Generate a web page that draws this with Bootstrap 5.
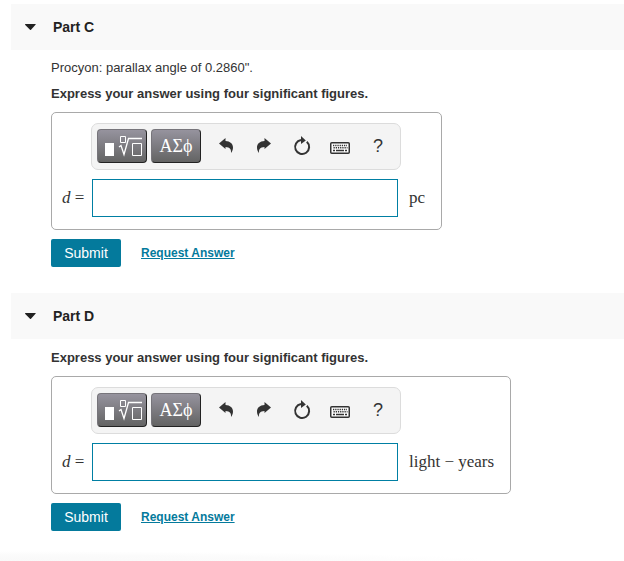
<!DOCTYPE html>
<html lang="en">
<head>
<meta charset="utf-8">
<meta name="viewport" content="width=device-width, initial-scale=1">
<title>Parallax – Parts C and D</title>
<link rel="stylesheet" href="https://cdn.jsdelivr.net/npm/bootstrap@5.3.0/dist/css/bootstrap.min.css">
<style>
  body { font: 13px/18px "Liberation Sans", Arial, sans-serif; color: #333; background: #fff; }
  .part-list { padding: 4px 0 0 11px; gap: 26px; }
  .part-head { height: 46px; padding: 0 14px; gap: 17px; background: #f9f9f9; color: #222; font-size: 14px; font-weight: 700; border: 0; text-align: left; }
  .part-body { padding: 9px 0 0 40px; }
  .prompt { margin-bottom: 8px; }
  .instruct { margin-bottom: 9px; font-weight: 700; }
  .instruct:first-child { padding-top: 1px; }
  .answer-box { width: fit-content; padding: 10px 16px 12px 10px; border: 1px solid #a9a9a9; border-radius: 5px; }
  .answer-grid { display: grid; grid-template-columns: 30px auto auto; row-gap: 9px; align-items: center; }
  .tools { grid-column: 2 / 4; justify-self: start; height: 47px; padding: 0 3px 2px 5px; margin-left: -1px; background: #f4f4f4; border: 1px solid #dcdcdc; border-radius: 7px; }
  .tpl { width: 50px; height: 34px; padding: 0; margin-right: 4px; border: 1px solid; border-color: #77757b #222 #222 #77757b; border-radius: 4px; background: linear-gradient(#96939e, #636363); color: #fff; font: 18px/32px "Liberation Serif", serif; }
  .tpl + .tpl { margin-right: 6px; }
  .tool { width: 38px; height: 34px; padding: 0; border: 0; background: none; color: #333; font-size: 18px; line-height: 34px; }
  .tool svg, .tpl svg { display: block; margin: auto; }
  .math { font: 17px/20px "Liberation Serif", serif; color: #333; }
  .entry { width: 306px; height: 38px; border: 1px solid #007fa3; border-radius: 0; padding: 0 8px; }
  .unit { padding-left: 11px; }
  .act-row { padding-top: 9px; gap: 20px; }
  .submit { width: 70px; height: 28px; padding: 0; border: 0; border-radius: 2px; background: #047a9c; color: #fff; font-size: 14px; line-height: 28px; }
  .ask { color: #047a9c; font-size: 12px; font-weight: 700; }
  .page-end { width: 80%; height: 10px; margin-top: 20px; background: radial-gradient(ellipse 100% 100% at 0 100%, #f9f9f9 0, #fbfbfb 60%, #fff 100%); }
</style>
</head>
<body>
<svg class="d-none" aria-hidden="true">
  <symbol id="caret" viewBox="0 0 11 6"><path d="M.5 0h10q.5 0 0 .7L6 5.700q-.5.5-1 0L0 .7Q0 0 .5 0z" fill="#222"/></symbol>
  <symbol id="root" viewBox="0 0 40 24"><path d="M3 9h9v13H3z" fill="#fff"/><path d="M18.500 2.500h5v6h-5zM30.500 9.500h9v12h-9z" fill="none" stroke="#fff"/><path d="M17 13l2-1.500 3 9L26.500 4.500H40" fill="none" stroke="#fff" stroke-width="1.300"/></symbol>
  <symbol id="undo" viewBox="0 0 14 15"><path d="M0 5.500L6.500 0v3c4.600.3 7.500 2.700 7.500 6.500 0 2-.6 3.800-2 5.500.4-3.500-1-5.800-5.500-6V11z" fill="#333"/></symbol>
  <symbol id="reset" viewBox="0 0 18 20"><path d="M13.800 5.800A7 7 0 1 1 8 4.100" fill="none" stroke="#333" stroke-width="2"/><path d="M8 0l4.800 4.500L8 8z" fill="#333"/></symbol>
  <symbol id="keys" viewBox="0 0 20 12"><rect x=".75" y=".75" width="18.500" height="10.500" rx="1" fill="#fff" stroke="#333" stroke-width="1.500"/><path d="M3 3.500h14M3.500 5.700h14" stroke="#333" stroke-width="1.500" stroke-dasharray="1.300 .9"/><path d="M3 8.500h2m1 0h8m1 0h2" stroke="#333" stroke-width="1.500"/></symbol>
</svg>
<main class="part-list d-flex flex-column">
  <section>
    <button type="button" class="part-head d-flex align-items-center w-100" aria-expanded="true"><svg width="11" height="6" aria-hidden="true"><use href="#caret"/></svg>Part C</button>
    <div class="part-body">
      <p class="prompt">Procyon: parallax angle of 0.2860".</p>
      <p class="instruct">Express your answer using four significant figures.</p>
      <div class="answer-box">
        <div class="answer-grid">
          <div class="tools d-flex align-items-center" role="toolbar" aria-label="Equation tools">
            <button type="button" class="tpl" aria-label="Templates"><svg width="40" height="24"><use href="#root"/></svg></button>
            <button type="button" class="tpl">ΑΣϕ</button>
            <button type="button" class="tool" aria-label="Undo"><svg width="14" height="15"><use href="#undo"/></svg></button>
            <button type="button" class="tool" aria-label="Redo"><svg width="14" height="15"><use href="#undo" transform="matrix(-1 0 0 1 14 0)"/></svg></button>
            <button type="button" class="tool" aria-label="Reset"><svg width="18" height="20"><use href="#reset"/></svg></button>
            <button type="button" class="tool pt-1" aria-label="Keyboard"><svg width="20" height="12"><use href="#keys"/></svg></button>
            <button type="button" class="tool">?</button>
          </div>
          <label class="math" for="answer-c"><i>d</i> =</label>
          <input class="entry" id="answer-c" type="text">
          <span class="math unit">pc</span>
        </div>
      </div>
      <div class="act-row d-flex align-items-center">
        <button type="button" class="submit">Submit</button>
        <a href="#" class="ask">Request Answer</a>
      </div>
    </div>
  </section>
  <section>
    <button type="button" class="part-head d-flex align-items-center w-100" aria-expanded="true"><svg width="11" height="6" aria-hidden="true"><use href="#caret"/></svg>Part D</button>
    <div class="part-body">
      <p class="instruct">Express your answer using four significant figures.</p>
      <div class="answer-box">
        <div class="answer-grid">
          <div class="tools d-flex align-items-center" role="toolbar" aria-label="Equation tools">
            <button type="button" class="tpl" aria-label="Templates"><svg width="40" height="24"><use href="#root"/></svg></button>
            <button type="button" class="tpl">ΑΣϕ</button>
            <button type="button" class="tool" aria-label="Undo"><svg width="14" height="15"><use href="#undo"/></svg></button>
            <button type="button" class="tool" aria-label="Redo"><svg width="14" height="15"><use href="#undo" transform="matrix(-1 0 0 1 14 0)"/></svg></button>
            <button type="button" class="tool" aria-label="Reset"><svg width="18" height="20"><use href="#reset"/></svg></button>
            <button type="button" class="tool pt-1" aria-label="Keyboard"><svg width="20" height="12"><use href="#keys"/></svg></button>
            <button type="button" class="tool">?</button>
          </div>
          <label class="math" for="answer-d"><i>d</i> =</label>
          <input class="entry" id="answer-d" type="text">
          <span class="math unit">light − years</span>
        </div>
      </div>
      <div class="act-row d-flex align-items-center">
        <button type="button" class="submit">Submit</button>
        <a href="#" class="ask">Request Answer</a>
      </div>
    </div>
  </section>
</main>
<div class="page-end"></div>
<script src="https://cdn.jsdelivr.net/npm/bootstrap@5.3.0/dist/js/bootstrap.bundle.min.js"></script>
</body>
</html>
